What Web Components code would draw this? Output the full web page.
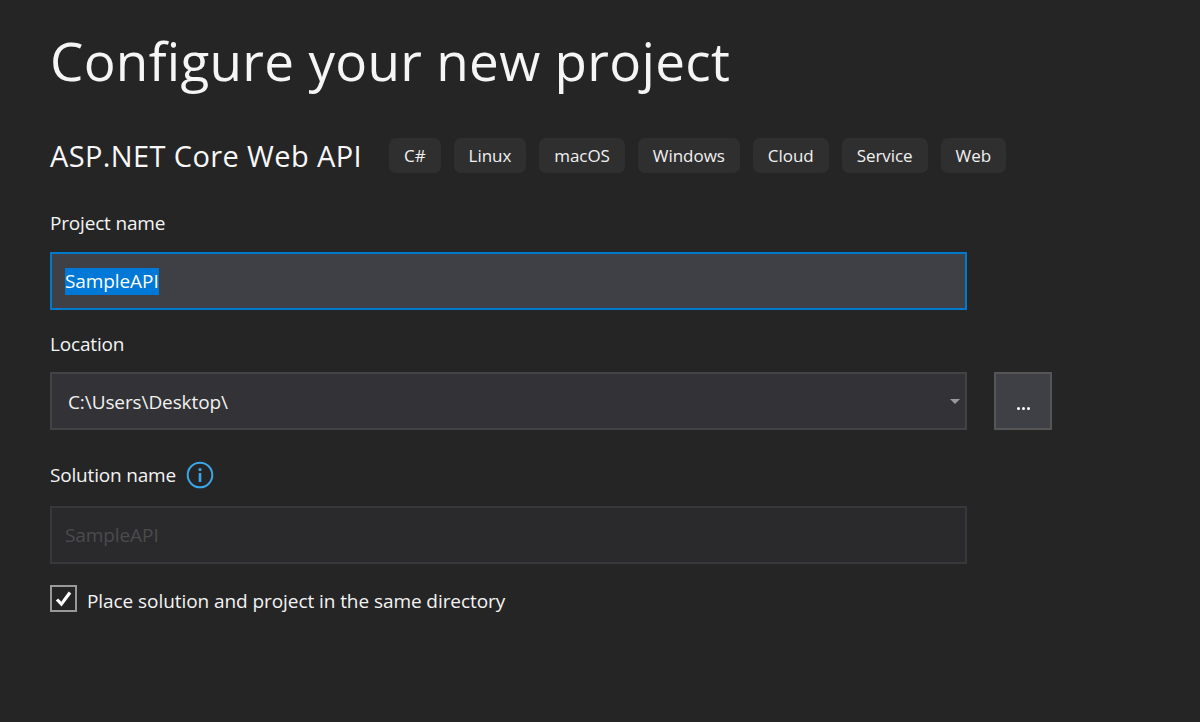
<!DOCTYPE html>
<html lang="en"><head><meta charset="utf-8"><title>Configure your new project</title>
<style>
html,body{margin:0;height:100%;background:#252526;overflow:hidden}
body{font-family:"Open Sans","Noto Sans",sans-serif;color:#fff;box-sizing:border-box;padding:0 0 0 50px}
</style></head><body>
<config-page>
  <span slot="title">Configure your new project</span>
  <span slot="template">ASP.NET Core Web API</span>
  <tag-chip>C#</tag-chip><tag-chip>Linux</tag-chip><tag-chip>macOS</tag-chip><tag-chip>Windows</tag-chip><tag-chip>Cloud</tag-chip><tag-chip>Service</tag-chip><tag-chip>Web</tag-chip>
</config-page>
<script>
function el(name,css,html){
  customElements.define(name,class extends HTMLElement{
    constructor(){super();const r=this.attachShadow({mode:'open'});r.innerHTML='<style>'+css+'</style>'+html;}
  });
}
el('tag-chip',`:host{display:inline-flex;align-items:center;box-sizing:border-box;height:35px;padding:0 15px;border-radius:7px;background:#2f2f30;font-size:17px;letter-spacing:-.05px;color:#f1f1f1}`,'<slot></slot>');
el('field-label',`:host{display:flex;align-items:center;gap:10px;height:28px;font-size:19px;letter-spacing:-.18px;color:#f4f4f4}
::slotted(svg){width:28px;height:28px;display:block}`,`<slot></slot><slot name="after"></slot>`);
el('text-box',`:host{display:flex;align-items:center;box-sizing:border-box;width:917px;height:58px;padding:0 13px;background:#3f3f46;border:2px solid #007acc;font-size:19px;letter-spacing:-.09px;color:#fff}
:host([disabled]){background:#2a2a2c;border-color:#38383a;color:#4a4a4c}
`,`<slot></slot>`);
el('combo-box',`:host{display:flex;align-items:center;box-sizing:border-box;width:917px;height:58px;padding:0 5px 0 16px;background:#333337;border:2px solid #434346;font-size:19px;letter-spacing:-.1px;color:#f1f1f1}
span{flex:1;padding-top:1px}
i{width:0;height:0;border:5px solid transparent;border-top:5px solid #999;border-bottom:0}`,`<span><slot></slot></span><i></i>`);
el('dots-button',`:host{display:flex;align-items:center;justify-content:center;box-sizing:border-box;width:58px;height:58px;background:#3f3f46;border:2px solid #555}
span{display:flex;gap:2px;margin-top:14px}b{width:3px;height:3px;border-radius:50%;background:#fff}`,`<span role="img" aria-label="Browse"><b></b><b></b><b></b></span>`);
el('check-row',`:host{display:flex;align-items:center;gap:10px;height:28px;font-size:19px;letter-spacing:-.07px;color:#f4f4f4}
.box{box-sizing:border-box;width:27px;height:27px;border:2px solid #999;background:#252526;display:flex;align-items:center;justify-content:center;margin-top:-6px}
svg{width:17px;height:17px;display:block}`,`<div class="box"><svg viewBox="0 0 17 17"><path d="M2 9.5l4.4 4.6L15 2.5" fill="none" stroke="#fff" stroke-width="3.2"/></svg></div><slot></slot>`);
el('config-page',`:host{display:block;width:1150px}
h1{margin:0;font-weight:400;font-size:53px;line-height:72px;padding-top:25px;height:73px;letter-spacing:.3px;color:#f5f5f5;white-space:nowrap}
.head{display:flex;align-items:center;height:35px;margin-top:40px;gap:13px}
.t{font-size:29px;letter-spacing:.38px;margin-right:14px;color:#f7f7f7;white-space:nowrap}
.row{display:flex;gap:27px;margin-top:14px}
.sel{background:#0078d7;line-height:27px}
`,`<h1><slot name="title"></slot></h1>
<div class="head"><div class="t"><slot name="template"></slot></div><slot></slot></div>
<field-label style="margin-top:36px">Project name</field-label>
<text-box style="margin-top:15px"><span class="sel">SampleAPI</span></text-box>
<field-label style="margin-top:20px">Location</field-label>
<div class="row"><combo-box>C:\\Users\\Desktop\\</combo-box><dots-button></dots-button></div>
<field-label style="margin-top:31px">Solution name <svg slot="after" viewBox="0 0 28 28"><circle cx="14" cy="14" r="12.3" fill="none" stroke="#3ba6e8" stroke-width="2"/><circle cx="14" cy="8.6" r="1.6" fill="#3ba6e8"/><rect x="12.7" y="12" width="2.6" height="9" fill="#3ba6e8"/></svg></field-label>
<text-box disabled style="margin-top:17px">SampleAPI</text-box>
<check-row style="margin-top:23px">Place solution and project in the same directory</check-row>`);
</script>
</body></html>
